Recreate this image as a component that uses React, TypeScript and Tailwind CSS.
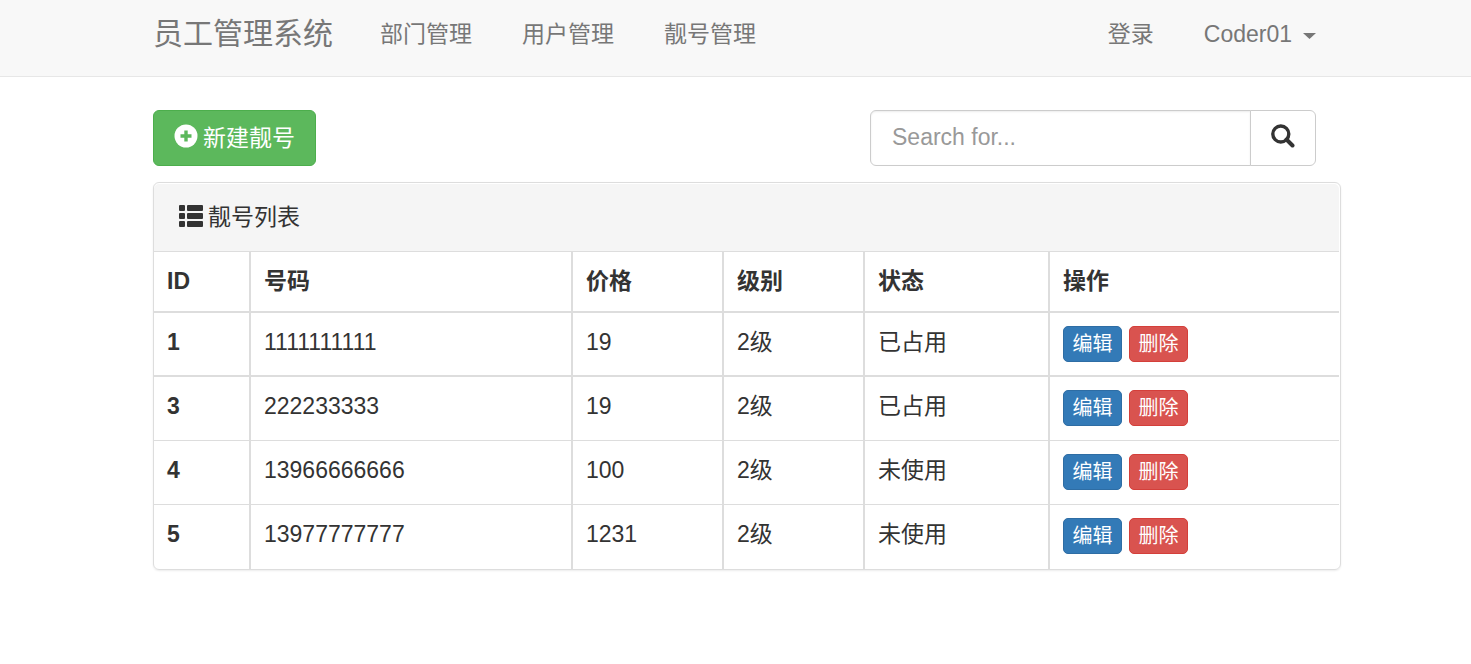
import clsx from 'clsx'

const navLinks = ['部门管理', '用户管理', '靓号管理']

const columns = ['ID', '号码', '价格', '级别', '状态', '操作']

const numbers = [
  { id: 1, mobile: '1111111111', price: 19, level: '2级', status: '已占用' },
  { id: 3, mobile: '222233333', price: 19, level: '2级', status: '已占用' },
  { id: 4, mobile: '13966666666', price: 100, level: '2级', status: '未使用' },
  { id: 5, mobile: '13977777777', price: 1231, level: '2级', status: '未使用' },
]

function PlusIcon() {
  return (
    <svg viewBox="0 0 24 24" className="size-6" aria-hidden="true">
      <circle cx="12" cy="12" r="11.5" fill="currentColor" />
      <path d="M10.300 6.500h3.400v3.800h3.800v3.400h-3.800v3.800h-3.400v-3.800H6.500v-3.400h3.800z" fill="#5cb85c" />
    </svg>
  )
}

function SearchIcon() {
  return (
    <svg viewBox="0 0 24 24" className="size-6" aria-hidden="true">
      <circle cx="9.800" cy="10" r="8" fill="none" stroke="currentColor" strokeWidth="3.400" />
      <path d="M15.500 15.500L21.500 21.500" stroke="currentColor" strokeWidth="4" strokeLinecap="round" />
    </svg>
  )
}

function ListIcon() {
  return (
    <svg viewBox="0 0 24 24" className="size-6" fill="currentColor" aria-hidden="true">
      <rect x="0" y="1" width="6" height="6" rx="1" />
      <rect x="8" y="1" width="16" height="6" rx="1" />
      <rect x="0" y="9" width="6" height="6" rx="1" />
      <rect x="8" y="9" width="16" height="6" rx="1" />
      <rect x="0" y="17" width="6" height="6" rx="1" />
      <rect x="8" y="17" width="16" height="6" rx="1" />
    </svg>
  )
}

function Navbar() {
  return (
    <nav className="border-b border-[#e7e7e7] bg-[#f8f8f8] text-[#777]">
      <div className="mx-auto flex h-[76px] max-w-[1213px] items-start justify-between pt-4 pr-[26px] pl-6">
        <div className="flex items-center">
          <a href="#" className="mr-[47px] text-[30px] leading-9">
            员工管理系统
          </a>
          <ul className="flex gap-[50px]">
            {navLinks.map((label) => (
              <li key={label}>
                <a href="#">{label}</a>
              </li>
            ))}
          </ul>
        </div>
        <ul className="flex gap-[50px] leading-9">
          <li>
            <a href="#">登录</a>
          </li>
          <li>
            <button type="button" className="flex items-center gap-[11px]">
              Coder01
              <svg viewBox="0 0 13 6" className="mt-1 h-[6px] w-[13px]" fill="currentColor" aria-hidden="true">
                <path d="M0 0h13L6.500 6z" />
              </svg>
            </button>
          </li>
        </ul>
      </div>
    </nav>
  )
}

function Toolbar() {
  return (
    <div className="mb-4 flex items-center justify-between">
      <a
        href="#"
        className="flex h-14 items-center gap-[5px] rounded-md border border-[#4cae4c] bg-[#5cb85c] px-5 text-white"
      >
        <span className="pb-1">
          <PlusIcon />
        </span>
        新建靓号
      </a>
      <form className="flex h-14 w-[446px]">
        <input
          type="text"
          aria-label="Search"
          placeholder="Search for..."
          className="min-w-0 flex-1 rounded-l-md border border-[#ccc] px-[21px] pb-[2px] shadow-[inset_0_1px_2px_rgba(0,0,0,0.075)] placeholder:text-[#999]"
        />
        <button
          type="submit"
          aria-label="Search"
          className="-ml-px flex w-[66px] items-center justify-center rounded-r-md border border-[#ccc] bg-white pb-1"
        >
          <SearchIcon />
        </button>
      </form>
    </div>
  )
}

function NumberTable() {
  return (
    <table className="w-full table-fixed border-separate border-spacing-0 text-left">
      <colgroup>
        <col className="w-[97px]" />
        <col className="w-[322px]" />
        <col className="w-[151px]" />
        <col className="w-[141px]" />
        <col className="w-[185px]" />
        <col />
      </colgroup>
      <thead>
        <tr>
          {columns.map((name) => (
            <th key={name} className="border-r-2 border-b-2 border-[#ddd] p-[13px] last:border-r-0">
              {name}
            </th>
          ))}
        </tr>
      </thead>
      <tbody>
        {numbers.map((row, index) => {
          const cell = clsx(
            'h-16 border-r-2 border-[#ddd] p-[13px] align-top last:border-r-0',
            index === 0 && 'border-b-2',
            index > 0 && index < numbers.length - 1 && 'border-b',
          )
          return (
            <tr key={row.id}>
              <th scope="row" className={cell}>{row.id}</th>
              <td className={cell}>{row.mobile}</td>
              <td className={cell}>{row.price}</td>
              <td className={cell}>{row.level}</td>
              <td className={cell}>{row.status}</td>
              <td className={cell}>
                <div className="flex gap-[7px] text-center text-xl leading-[34px] text-white">
                  <a href="#" className="h-9 w-[59px] rounded-[5px] border border-[#2e6da4] bg-[#337ab7]">
                    编辑
                  </a>
                  <a href="#" className="h-9 w-[59px] rounded-[5px] border border-[#d43f3a] bg-[#d9534f]">
                    删除
                  </a>
                </div>
              </td>
            </tr>
          )
        })}
      </tbody>
    </table>
  )
}

export default function App() {
  return (
    <div className="min-h-screen bg-white font-['Liberation_Sans','Noto_Sans_CJK_SC',sans-serif] text-[23px] leading-[33px] text-[#333]">
      <Navbar />
      <main className="mx-auto max-w-[1213px] pt-[33px] pr-[26px] pb-8 pl-6">
        <Toolbar />
        <div className="-mr-[25px] rounded-md border border-[#ddd] pt-px pr-px shadow-[0_1px_2px_rgba(0,0,0,0.08)]">
          <div className="flex h-[68px] items-center gap-[5px] rounded-t-[5px] border-b border-[#ddd] bg-[#f5f5f5] px-[25px]">
            <span className="pb-1">
              <ListIcon />
            </span>
            靓号列表
          </div>
          <NumberTable />
        </div>
      </main>
    </div>
  )
}
